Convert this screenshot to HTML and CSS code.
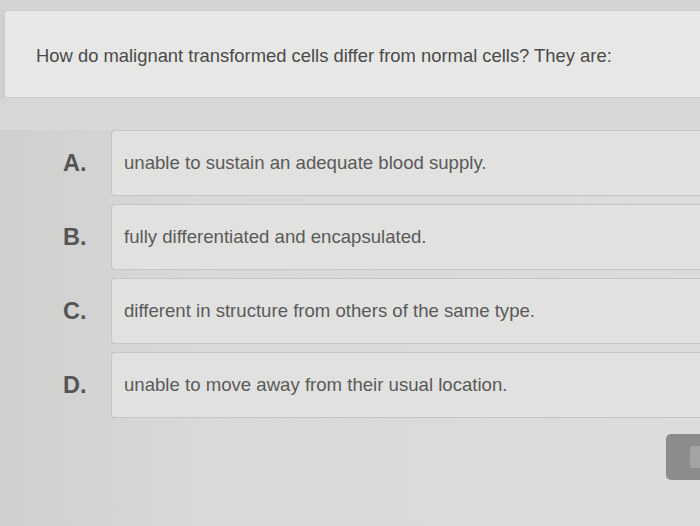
FILE: index.html
```html
<!DOCTYPE html>
<html>
<head>
<meta charset="utf-8">
<link rel="stylesheet" href="styles.css">
</head>
<body>
<div class="page">
  <div class="topband"></div>
  <div class="question">How do malignant transformed cells differ from normal cells? They are:</div>
  <div class="sepband"></div>
  <div class="options">
    <div class="opt"><div class="letter">A.</div><div class="box">unable to sustain an adequate blood supply.</div></div>
    <div class="opt"><div class="letter">B.</div><div class="box">fully differentiated and encapsulated.</div></div>
    <div class="opt"><div class="letter">C.</div><div class="box">different in structure from others of the same type.</div></div>
    <div class="opt"><div class="letter">D.</div><div class="box">unable to move away from their usual location.</div></div>
  </div>
  <div class="footer"><div class="btn"><span class="btn-glyph"></span></div></div>
</div>
</body>
</html>
```
FILE: styles.css
```css
html, body { margin: 0; padding: 0; }
body {
  width: 700px; height: 526px; overflow: hidden;
  background: linear-gradient(90deg, #cfcfcd 0%, #d9d9d7 30%, #dcdcda 100%);
  font-family: "Liberation Sans", Arial, sans-serif;
}
.page { display: flex; flex-direction: column; height: 526px; }
.topband { height: 10px; background: #d4d4d2; }
.question {
  margin-left: 4px;
  height: 88px;
  box-sizing: border-box;
  background: #e7e7e5;
  border: 1px solid #cbcbc9;
  border-right: none;
  border-radius: 3px 0 0 3px;
  padding: 34px 0 0 31px;
  font-size: 18.4px;
  color: #4a4a4a;
}
.sepband { height: 32px; background: linear-gradient(180deg, #d6d6d4, #d9d9d7); }
.options { display: flex; flex-direction: column; gap: 8px; }
.opt { display: flex; align-items: center; height: 66px; }
.letter {
  width: 111px; box-sizing: border-box; padding-left: 63px;
  font-weight: bold; font-size: 23.5px; color: #555555;
}
.box {
  flex: 1; height: 100%; box-sizing: border-box;
  background: #e1e1df;
  border: 1px solid #c6c6c4; border-right: none;
  border-radius: 4px 0 0 4px;
  display: flex; align-items: center;
  padding-left: 12px;
  font-size: 18.6px; color: #5a5a5a;
}
.footer { display: flex; justify-content: flex-end; padding-top: 16px; }
.btn {
  width: 34px; height: 46px; background: #8c8c8b;
  border-radius: 5px 0 0 5px;
  display: flex; align-items: center; justify-content: flex-end;
}
.btn-glyph { width: 10px; height: 22px; background: #a3a3a2; border-radius: 3px 0 0 3px; }
```
